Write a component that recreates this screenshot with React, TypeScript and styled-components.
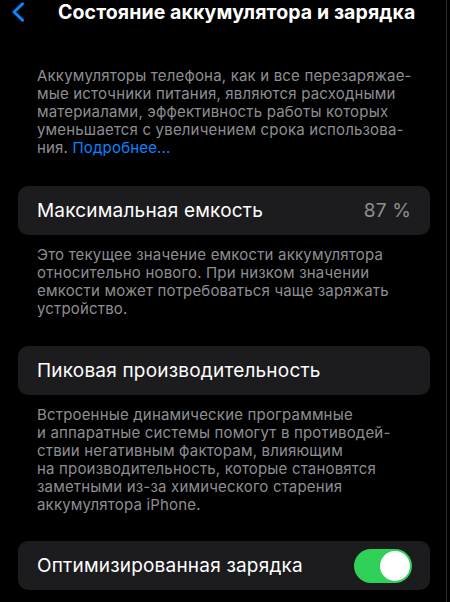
import styled, { createGlobalStyle } from "styled-components";

const GlobalStyle = createGlobalStyle`
  html, body {
    margin: 0;
    padding: 0;
    background: #000;
  }
  body {
    font-family: Inter, "Noto Sans", "Liberation Sans", sans-serif;
    -webkit-font-smoothing: antialiased;
  }
`;

const Screen = styled.div`
  width: 447px;
  height: 602px;
  overflow: hidden;
  background: #000;
  border-right: 1px solid #2a2a2c;
  box-sizing: border-box;
`;

const Header = styled.div`
  display: flex;
  align-items: center;
  height: 24px;
  padding-left: 11px;
`;

const BackButton = styled.div`
  width: 14px;
  height: 20px;
  display: flex;
  align-items: center;
`;

const Title = styled.h1`
  margin: 0 0 0 33px;
  font-size: 19.5px;
  font-weight: 700;
  color: #fff;
  white-space: nowrap;
  letter-spacing: 0.1px;
`;

const Content = styled.div`
  display: flex;
  flex-direction: column;
  padding: 43px 16px 0 18px;
`;

const Note = styled.p<{ $gapAfter: number }>`
  margin: 0 0 ${({ $gapAfter }) => $gapAfter}px 19px;
  font-size: 15px;
  line-height: 18px;
  letter-spacing: 0.18px;
  color: #8e8e93;
  white-space: nowrap;
`;

const Link = styled.span`
  color: #0a84ff;
`;

const Card = styled.div`
  display: flex;
  align-items: center;
  justify-content: space-between;
  height: 49px;
  padding: 0 19px;
  border-radius: 10px;
  background: #1c1c1e;
  margin-bottom: 11px;
`;

const CardLabel = styled.span`
  font-size: 19px;
  letter-spacing: 0.2px;
  color: #fff;
`;

const CardValue = styled.span`
  font-size: 19px;
  letter-spacing: 0.2px;
  color: #8e8e93;
`;

const Toggle = styled.div<{ $on: boolean }>`
  width: 58px;
  height: 34px;
  border-radius: 17px;
  background: ${({ $on }) => ($on ? "#30d158" : "#39393d")};
  display: flex;
  align-items: center;
  justify-content: ${({ $on }) => ($on ? "flex-end" : "flex-start")};
  padding: 0 2px;
  box-sizing: border-box;
  margin-right: -1px;
`;

const Knob = styled.div`
  width: 30px;
  height: 30px;
  border-radius: 50%;
  background: #fff;
`;

export default function App() {
  return (
    <Screen>
      <GlobalStyle />
      <Header>
        <BackButton>
          <svg width="14" height="20" viewBox="0 0 14 20">
            <path
              d="M11.5 1.8 L3 10 L11.5 18.2"
              fill="none"
              stroke="#0a84ff"
              strokeWidth="3"
              strokeLinecap="round"
              strokeLinejoin="round"
            />
          </svg>
        </BackButton>
        <Title>Состояние аккумулятора и зарядка</Title>
      </Header>
      <Content>
        <Note $gapAfter={29}>
          Аккумуляторы телефона, как и все перезаряжае-
          <br />
          мые источники питания, являются расходными
          <br />
          материалами, эффективность работы которых
          <br />
          уменьшается с увеличением срока использова-
          <br />
          ния. <Link>Подробнее...</Link>
        </Note>
        <Card>
          <CardLabel>Максимальная емкость</CardLabel>
          <CardValue>87 %</CardValue>
        </Card>
        <Note $gapAfter={28}>
          Это текущее значение емкости аккумулятора
          <br />
          относительно нового. При низком значении
          <br />
          емкости может потребоваться чаще заряжать
          <br />
          устройство.
        </Note>
        <Card>
          <CardLabel>Пиковая производительность</CardLabel>
        </Card>
        <Note $gapAfter={27}>
          Встроенные динамические программные
          <br />
          и аппаратные системы помогут в противодей-
          <br />
          ствии негативным факторам, влияющим
          <br />
          на производительность, которые становятся
          <br />
          заметными из-за химического старения
          <br />
          аккумулятора iPhone.
        </Note>
        <Card>
          <CardLabel>Оптимизированная зарядка</CardLabel>
          <Toggle $on>
            <Knob />
          </Toggle>
        </Card>
      </Content>
    </Screen>
  );
}
